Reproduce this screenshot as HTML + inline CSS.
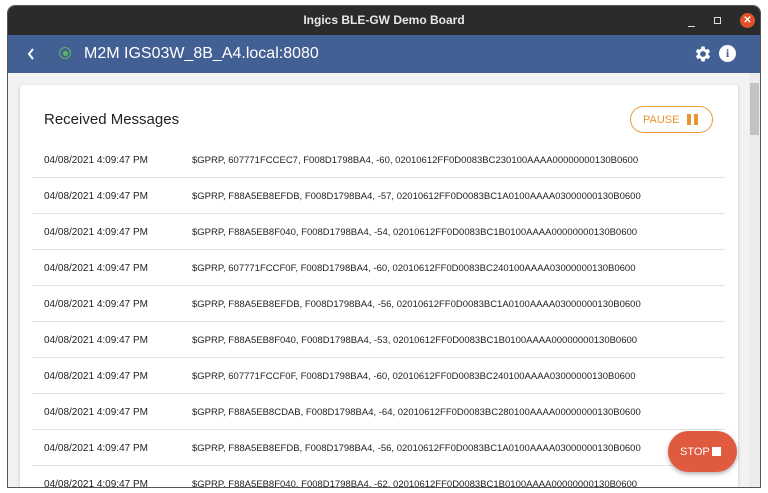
<!DOCTYPE html>
<html><head><meta charset="utf-8"><style>
*{margin:0;padding:0;box-sizing:border-box}
body{width:768px;height:493px;background:#fff;position:relative;overflow:hidden;font-family:"Liberation Sans",sans-serif}
.win{position:absolute;left:7px;top:5px;width:754px;height:483px;border:1px solid #555;border-radius:8px 8px 0 0;overflow:hidden;background:#f2f2f2}
.tb{position:absolute;left:0;top:0;width:100%;height:29px;background:#2b2b2b;color:#e8e8e8;font-size:12px;font-weight:bold;text-align:center;line-height:29px}
.hd{position:absolute;left:0;top:29px;width:100%;height:38px;background:#436095;color:#fff}
.sb{position:absolute;right:0;top:67px;width:11px;height:416px;background:#ececec}
.card{position:absolute;left:12px;top:79px;width:718px;height:420px;background:#fff;border-radius:3px;box-shadow:0 1px 3px rgba(0,0,0,.2)}
.row{position:absolute;left:12px;width:693px;height:36px;border-bottom:1px solid #e2e2e2;font-size:9.5px;color:#222;line-height:38px}
.row span{position:absolute;left:12px;font-size:10px}
.row b{position:absolute;left:160px;font-weight:normal}
</style></head><body>
<div class="win">
<div class="tb">Ingics BLE-GW Demo Board
<span style="position:absolute;left:680px;top:20px;width:7px;height:1px;background:#ddd"></span>
<span style="position:absolute;left:706px;top:11px;width:7px;height:7px;border:1px solid #ddd"></span>
<span style="position:absolute;left:732px;top:7px;width:15px;height:15px;border-radius:50%;background:#e2502a;color:#fff;font-size:10px;line-height:15px">✕</span>
</div>
<div class="hd">
<svg style="position:absolute;left:18px;top:12px" width="10" height="14" viewBox="0 0 10 14"><path d="M7 2L3 7l4 5" stroke="#fff" stroke-width="2" fill="none"/></svg>
<span style="position:absolute;left:51px;top:12px;width:12px;height:12px;border-radius:50%;border:1.5px solid #5cb85c"></span>
<span style="position:absolute;left:54.5px;top:15.5px;width:5px;height:5px;border-radius:50%;background:#5cb85c"></span>
<span style="position:absolute;left:76px;top:10px;font-size:16px">M2M IGS03W_8B_A4.local:8080</span>
<svg style="position:absolute;left:685px;top:9px" width="20" height="20" viewBox="0 0 24 24"><path fill="#fff" fill-rule="evenodd" d="M19.4 13a7.5 7.5 0 000-2l2.1-1.6-2-3.5-2.5 1a7 7 0 00-1.7-1L15 3h-4l-.4 2.9a7 7 0 00-1.7 1l-2.5-1-2 3.5L6.6 11a7.5 7.5 0 000 2l-2.1 1.6 2 3.5 2.5-1a7 7 0 001.7 1L11 21h4l.4-2.9a7 7 0 001.7-1l2.5 1 2-3.5zM13 15.5A3.5 3.5 0 1113 8.5a3.5 3.5 0 010 7z" transform="translate(-1 0)"/></svg>
<span style="position:absolute;left:711px;top:10px;width:17px;height:17px;border-radius:50%;background:#fff;color:#436095;font-weight:bold;font-size:12px;text-align:center;line-height:17px;font-family:'Liberation Serif',serif">i</span>
</div>
<div class="sb"><div style="position:absolute;left:1px;top:10px;width:9px;height:52px;background:#c2c2c2"></div></div>
<div class="card">
<div style="position:absolute;left:24px;top:26px;font-size:15px;color:#222">Received Messages</div>
<div style="position:absolute;left:610px;top:21px;width:83px;height:27px;border:1px solid #e89a3c;border-radius:14px;color:#e8942f;font-size:11px;line-height:27px;padding-left:12px">PAUSE<span style="position:absolute;left:56px;top:7px;width:3.5px;height:11px;background:#e8942f"></span><span style="position:absolute;left:63px;top:7px;width:3.5px;height:11px;background:#e8942f"></span></div>
</div>
<div style="position:absolute;left:12px;top:79px;width:718px;height:420px">
<div class="row" style="top:57px"><span>04/08/2021 4:09:47 PM</span><b>$GPRP, 607771FCCEC7, F008D1798BA4, -60, 02010612FF0D0083BC230100AAAA00000000130B0600</b></div>
<div class="row" style="top:93px"><span>04/08/2021 4:09:47 PM</span><b>$GPRP, F88A5EB8EFDB, F008D1798BA4, -57, 02010612FF0D0083BC1A0100AAAA03000000130B0600</b></div>
<div class="row" style="top:129px"><span>04/08/2021 4:09:47 PM</span><b>$GPRP, F88A5EB8F040, F008D1798BA4, -54, 02010612FF0D0083BC1B0100AAAA00000000130B0600</b></div>
<div class="row" style="top:165px"><span>04/08/2021 4:09:47 PM</span><b>$GPRP, 607771FCCF0F, F008D1798BA4, -60, 02010612FF0D0083BC240100AAAA03000000130B0600</b></div>
<div class="row" style="top:201px"><span>04/08/2021 4:09:47 PM</span><b>$GPRP, F88A5EB8EFDB, F008D1798BA4, -56, 02010612FF0D0083BC1A0100AAAA03000000130B0600</b></div>
<div class="row" style="top:237px"><span>04/08/2021 4:09:47 PM</span><b>$GPRP, F88A5EB8F040, F008D1798BA4, -53, 02010612FF0D0083BC1B0100AAAA00000000130B0600</b></div>
<div class="row" style="top:273px"><span>04/08/2021 4:09:47 PM</span><b>$GPRP, 607771FCCF0F, F008D1798BA4, -60, 02010612FF0D0083BC240100AAAA03000000130B0600</b></div>
<div class="row" style="top:309px"><span>04/08/2021 4:09:47 PM</span><b>$GPRP, F88A5EB8CDAB, F008D1798BA4, -64, 02010612FF0D0083BC280100AAAA00000000130B0600</b></div>
<div class="row" style="top:345px"><span>04/08/2021 4:09:47 PM</span><b>$GPRP, F88A5EB8EFDB, F008D1798BA4, -56, 02010612FF0D0083BC1A0100AAAA03000000130B0600</b></div>
<div class="row" style="top:381px"><span>04/08/2021 4:09:47 PM</span><b>$GPRP, F88A5EB8F040, F008D1798BA4, -62, 02010612FF0D0083BC1B0100AAAA00000000130B0600</b></div>
</div>
<div style="position:absolute;left:660px;top:425px;width:69px;height:41px;border-radius:21px;background:#df5a3e;box-shadow:0 2px 4px rgba(0,0,0,.3);color:#fff;font-size:11px;line-height:43px;padding-left:12px">STOP<span style="position:absolute;left:44px;top:16px;width:9px;height:9px;background:#fff"></span></div>
</div>
</body></html>
